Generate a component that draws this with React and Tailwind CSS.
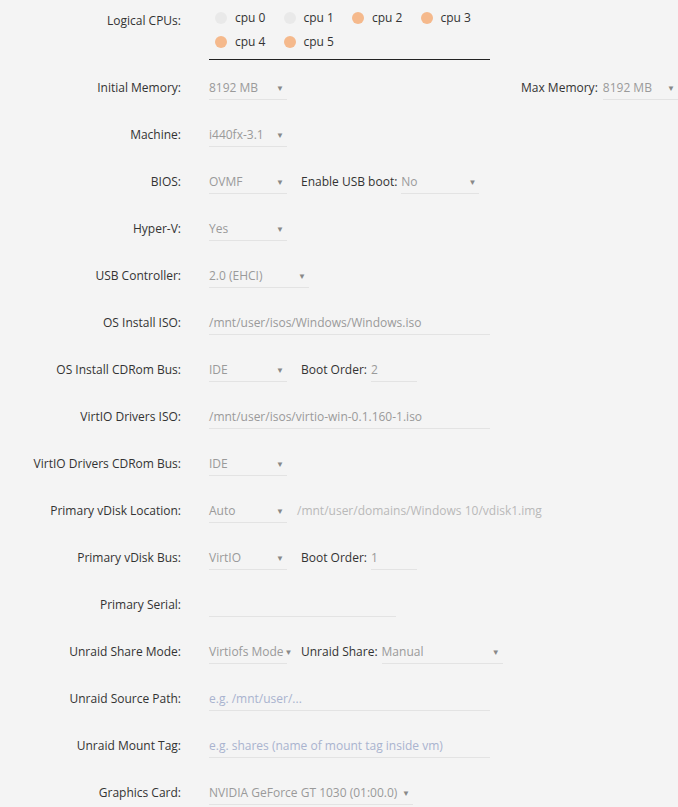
const FONT = { fontFamily: '"Open Sans", "Liberation Sans", sans-serif' };

function Select({ value, width = "w-[78px]" }) {
  return (
    <div
      className={`${width} h-[24px] border-b border-[#e3e3e3] flex items-center justify-between pr-[3px] text-[#9a9a9a]`}
    >
      <span className="whitespace-nowrap">{value}</span>
      <span className="text-[8px] text-[#888] ml-[1px]">▼</span>
    </div>
  );
}

function TextField({ value, placeholder, width = "w-[281px]" }) {
  return (
    <div
      className={`${width} h-[24px] border-b border-[#e3e3e3] flex items-center`}
    >
      {value ? (
        <span className="text-[#9a9a9a] whitespace-nowrap">{value}</span>
      ) : (
        <span className="text-[#a9b3cf] whitespace-nowrap">{placeholder}</span>
      )}
    </div>
  );
}

function Inline({ label }) {
  return <span className="ml-[14px] mr-[4px] text-[#333] whitespace-nowrap">{label}</span>;
}

function Row({ label, children }) {
  return (
    <div className="flex items-center h-[47px]">
      <div className="w-[181px] text-right text-[#333] whitespace-nowrap shrink-0">
        {label}
      </div>
      <div className="ml-[28px] flex items-center">{children}</div>
    </div>
  );
}

function Cpu({ n, on }) {
  return (
    <div className="w-[68.5px] h-[24px] flex items-center pl-[6px]">
      <span
        className={`w-[12px] h-[12px] rounded-full ${on ? "bg-[#f5b98c]" : "bg-[#e9e9e9]"}`}
      />
      <span className="ml-[8px] text-[#333]">cpu {n}</span>
    </div>
  );
}

export default function App() {
  return (
    <div
      className="w-[678px] h-[807px] bg-[#f4f4f4] overflow-hidden text-[12px]"
      style={FONT}
    >
      <div className="flex items-start h-[64.5px] pt-[6px]">
        <div className="w-[181px] text-right text-[#333] mt-[3px] leading-[24px]">
          Logical CPUs:
        </div>
        <div className="ml-[28px] w-[281px] border-b border-[#222] pb-[5px]">
          <div className="flex">
            <Cpu n={0} />
            <Cpu n={1} />
            <Cpu n={2} on />
            <Cpu n={3} on />
          </div>
          <div className="flex">
            <Cpu n={4} on />
            <Cpu n={5} on />
          </div>
        </div>
      </div>

      <div className="flex items-center h-[47px]">
        <div className="w-[181px] text-right text-[#333] shrink-0">Initial Memory:</div>
        <div className="ml-[28px]">
          <Select value="8192 MB" />
        </div>
        <span className="ml-[234px] mr-[5px] text-[#333] whitespace-nowrap">Max Memory:</span>
        <Select value="8192 MB" />
      </div>

      <Row label="Machine:">
        <Select value="i440fx-3.1" />
      </Row>
      <Row label="BIOS:">
        <Select value="OVMF" />
        <Inline label="Enable USB boot:" />
        <Select value="No" />
      </Row>
      <Row label="Hyper-V:">
        <Select value="Yes" />
      </Row>
      <Row label="USB Controller:">
        <Select value="2.0 (EHCI)" width="w-[100px]" />
      </Row>
      <Row label="OS Install ISO:">
        <TextField value="/mnt/user/isos/Windows/Windows.iso" />
      </Row>
      <Row label="OS Install CDRom Bus:">
        <Select value="IDE" />
        <Inline label="Boot Order:" />
        <TextField value="2" width="w-[46px]" />
      </Row>
      <Row label="VirtIO Drivers ISO:">
        <TextField value="/mnt/user/isos/virtio-win-0.1.160-1.iso" />
      </Row>
      <Row label="VirtIO Drivers CDRom Bus:">
        <Select value="IDE" />
      </Row>
      <Row label="Primary vDisk Location:">
        <Select value="Auto" />
        <span className="ml-[10px] text-[#b9b9b9] whitespace-nowrap">
          /mnt/user/domains/Windows 10/vdisk1.img
        </span>
      </Row>
      <Row label="Primary vDisk Bus:">
        <Select value="VirtIO" />
        <Inline label="Boot Order:" />
        <TextField value="1" width="w-[46px]" />
      </Row>
      <Row label="Primary Serial:">
        <TextField value="" placeholder="" width="w-[187px]" />
      </Row>
      <Row label="Unraid Share Mode:">
        <Select value="Virtiofs Mode" />
        <Inline label="Unraid Share:" />
        <Select value="Manual" width="w-[121px]" />
      </Row>
      <Row label="Unraid Source Path:">
        <TextField placeholder="e.g. /mnt/user/..." />
      </Row>
      <Row label="Unraid Mount Tag:">
        <TextField placeholder="e.g. shares (name of mount tag inside vm)" />
      </Row>
      <Row label="Graphics Card:">
        <Select value="NVIDIA GeForce GT 1030 (01:00.0)" width="w-[204px]" />
      </Row>
    </div>
  );
}
